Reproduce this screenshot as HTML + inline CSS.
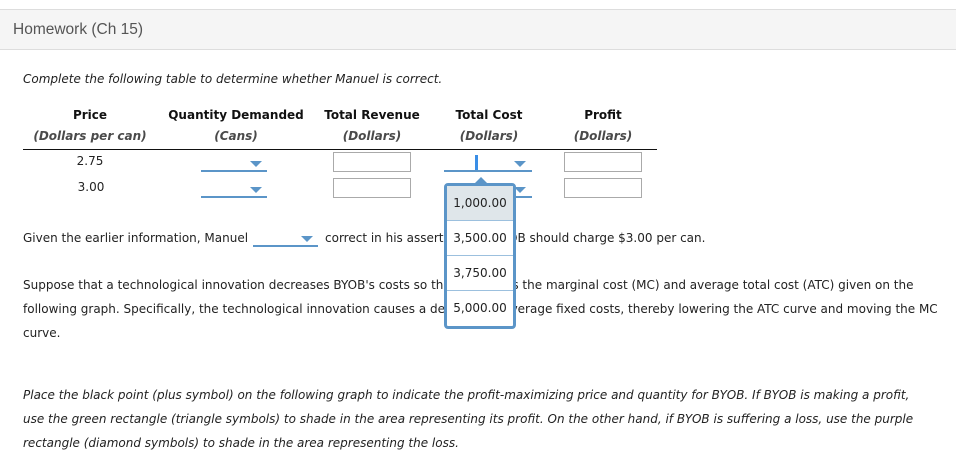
<!DOCTYPE html>
<html><head><meta charset="utf-8"><style>
body{margin:0;width:956px;height:452px;overflow:hidden;background:#fff;font-family:"DejaVu Sans","Liberation Sans",sans-serif;font-size:12px;color:#222;position:relative}
.a{position:absolute;white-space:nowrap}
.top{position:absolute;left:0;top:0;width:956px;height:9px;border-bottom:1px solid #ddd}
.hdr{position:absolute;left:0;top:10px;width:956px;height:39px;background:#f5f5f5;border-bottom:1px solid #ddd}
.hdr span{position:absolute;left:13px;top:11px;font-family:"Liberation Sans",sans-serif;font-size:15.5px;color:#555}
.b{font-weight:bold;color:#111}
.s{font-weight:bold;font-style:italic;color:#4a4a4a}
.c{transform:translateX(-50%)}
.box{position:absolute;width:76px;height:18px;border:1px solid #aaa;background:#fff}
.dd{position:absolute;height:2px;background:#5b95c8}
.tri{position:absolute;width:0;height:0;border-left:6px solid transparent;border-right:6px solid transparent;border-top:6px solid #5b95c8}
.pop{position:absolute;left:444px;top:183px;width:66px;height:140px;border:3px solid #5b95c8;border-radius:4px;background:#fff;z-index:2}
.pop div{height:34px;border-bottom:1px solid #9cc0de;text-align:center;line-height:34px;font-size:12px;color:#222}
.pop div:last-child{border-bottom:none}
</style></head><body>
<div class="top"></div>
<div class="hdr"><span>Homework (Ch 15)</span></div>
<div class="a" style="left:23px;top:72px;font-style:italic">Complete the following table to determine whether Manuel is correct.</div>

<div class="a b c" style="left:90px;top:108px">Price</div>
<div class="a b c" style="left:236px;top:108px">Quantity Demanded</div>
<div class="a b c" style="left:372px;top:108px">Total Revenue</div>
<div class="a b c" style="left:489px;top:108px">Total Cost</div>
<div class="a b c" style="left:603px;top:108px">Profit</div>
<div class="a s c" style="left:90px;top:129px">(Dollars per can)</div>
<div class="a s c" style="left:236px;top:129px">(Cans)</div>
<div class="a s c" style="left:372px;top:129px">(Dollars)</div>
<div class="a s c" style="left:489px;top:129px">(Dollars)</div>
<div class="a s c" style="left:603px;top:129px">(Dollars)</div>
<div class="a" style="left:23px;top:149px;width:634px;height:1px;background:#111"></div>

<div class="a c" style="left:90px;top:154px">2.75</div>
<div class="a c" style="left:91px;top:180px">3.00</div>

<div class="dd" style="left:201px;top:170px;width:66px"></div><div class="tri" style="left:250px;top:161px"></div>
<div class="dd" style="left:201px;top:196px;width:66px"></div><div class="tri" style="left:250px;top:187px"></div>
<div class="box" style="left:333px;top:152px"></div>
<div class="box" style="left:333px;top:178px"></div>
<div class="box" style="left:564px;top:152px"></div>
<div class="box" style="left:564px;top:178px"></div>
<div class="dd" style="left:444px;top:170px;width:88px"></div><div class="tri" style="left:514px;top:161px"></div>
<div class="a" style="left:475px;top:155px;width:3px;height:15px;background:#3a8ee6"></div>
<div class="dd" style="left:500px;top:196px;width:32px"></div><div class="tri" style="left:514px;top:187px"></div>

<div class="a" style="left:23px;top:231px">Given the earlier information, Manuel</div>
<div class="dd" style="left:253px;top:245px;width:65px"></div><div class="tri" style="left:301px;top:236px"></div>
<div class="a" style="left:325px;top:231px">correct in his assertion that BYOB should charge $3.00 per can.</div>

<div class="a" style="left:23px;top:278px">Suppose that a technological innovation decreases BYOB's costs so that it reduces the marginal cost (MC) and average total cost (ATC) given on the</div>
<div class="a" style="left:23px;top:302px">following graph. Specifically, the technological innovation causes a decrease in average fixed costs, thereby lowering the ATC curve and moving the MC</div>
<div class="a" style="left:23px;top:326px">curve.</div>

<div class="pop"><div style="background:#dfe6ea">1,000.00</div><div>3,500.00</div><div>3,750.00</div><div>5,000.00</div></div>
<div class="a" style="left:474px;top:177px;width:0;height:0;border-left:7px solid transparent;border-right:7px solid transparent;border-bottom:7px solid #5b95c8;z-index:3"></div>

<div class="a" style="left:23px;top:388px;font-style:italic">Place the black point (plus symbol) on the following graph to indicate the profit-maximizing price and quantity for BYOB. If BYOB is making a profit,</div>
<div class="a" style="left:23px;top:412px;font-style:italic">use the green rectangle (triangle symbols) to shade in the area representing its profit. On the other hand, if BYOB is suffering a loss, use the purple</div>
<div class="a" style="left:23px;top:436px;font-style:italic">rectangle (diamond symbols) to shade in the area representing the loss.</div>
</body></html>
